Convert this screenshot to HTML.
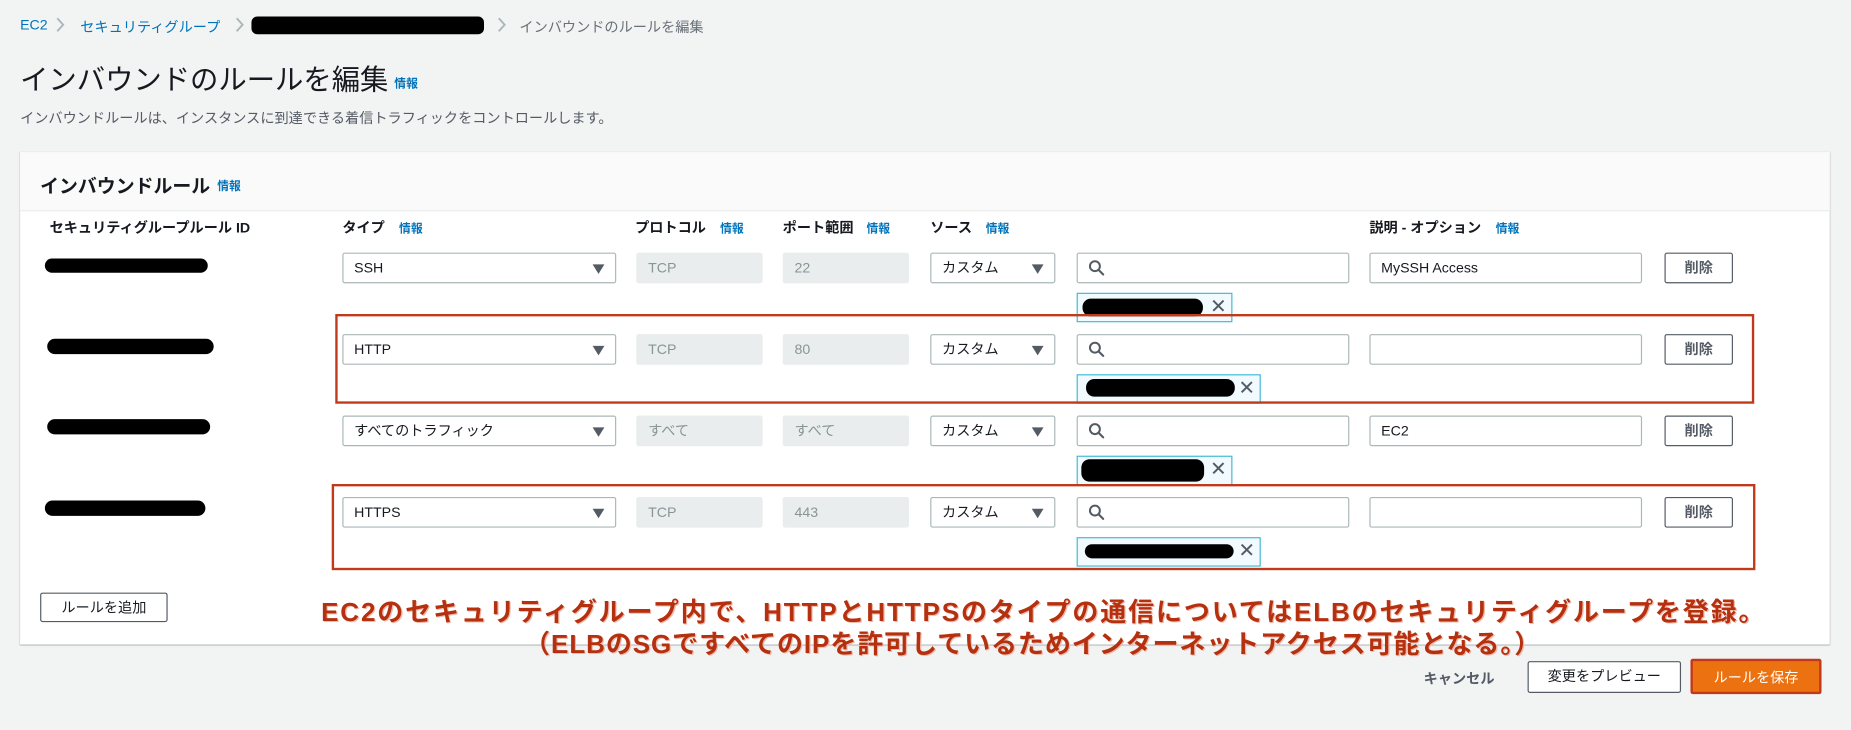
<!DOCTYPE html>
<html><head><meta charset="utf-8">
<style>
html,body{margin:0;padding:0;width:1851px;height:729px;overflow:hidden;background:#f2f3f3}
#s{position:absolute;left:0;top:0;width:1568px;height:618px;transform:scale(1.1805);transform-origin:0 0;font-family:"Liberation Sans","Noto Sans CJK JP",sans-serif;color:#16191f}
.a{position:absolute;white-space:nowrap}
.l{color:#0073bb}
.i{font-size:10px;color:#0073bb;font-weight:bold}
.bx{position:absolute;box-sizing:border-box;border:1px solid #aab7b8;background:#fff;height:26px;font-size:12px;line-height:24px;padding-left:9px;border-radius:2px}
.g{background:#eaeded;border-color:#eaeded;color:#879596}
.arr{position:absolute;right:9px;top:9px;width:0;height:0;border-left:5px solid transparent;border-right:5px solid transparent;border-top:8px solid #545b64}
.btn{position:absolute;box-sizing:border-box;border:1px solid #545b64;background:#fff;font-size:12px;text-align:center;line-height:24px;border-radius:2px;color:#545b64;font-weight:bold}
.tag{position:absolute;box-sizing:border-box;border:1px solid #44b9d6;background:#f1faff;height:25px}
.pill{position:absolute;background:#000;border-radius:7px}
.x{position:absolute;font-size:17px;color:#545b64;line-height:20px}
.red{position:absolute;border:2px solid #c0391b;box-sizing:border-box}
.q{position:absolute;left:9px;top:5px}
.chev{position:absolute;top:14px}
</style></head><body><div id="s">
<svg width="0" height="0" style="position:absolute"><defs><symbol id="mg" viewBox="0 0 14 14"><circle cx="5.5" cy="5.5" r="4.2" fill="none" stroke="#545b64" stroke-width="1.7"/><line x1="8.6" y1="8.6" x2="12.5" y2="12.5" stroke="#545b64" stroke-width="1.8" stroke-linecap="round"/></symbol><symbol id="cv" viewBox="0 0 8 14"><path d="M1.5 1.5 L6.5 7 L1.5 12.5" fill="none" stroke="#aab7b8" stroke-width="1.6"/></symbol></defs></svg>
<div class="a l" style="left:17px;top:14px;font-size:12px">EC2</div>
<svg class="chev" style="left:47px" width="8" height="14"><use href="#cv"/></svg>
<div class="a l" style="left:68px;top:14px;font-size:12px">セキュリティグループ</div>
<svg class="chev" style="left:199px" width="8" height="14"><use href="#cv"/></svg>
<div class="pill" style="left:213px;top:14px;width:197px;height:15px;border-radius:5px"></div>
<svg class="chev" style="left:421px" width="8" height="14"><use href="#cv"/></svg>
<div class="a" style="left:440px;top:14px;font-size:12px;color:#687078">インバウンドのルールを編集</div>
<div class="a" style="left:17px;top:48px;font-size:24px">インバウンドのルールを編集</div>
<div class="a i" style="left:334px;top:62px">情報</div>
<div class="a" style="left:17px;top:91px;font-size:12px;color:#545b64">インバウンドルールは、インスタンスに到達できる着信トラフィックをコントロールします。</div>
<div style="position:absolute;left:17px;top:128px;width:1533px;height:417px;background:#fff;box-shadow:0 1px 1px rgba(0,28,36,.4);border-top:1px solid #eaeded"></div>
<div style="position:absolute;left:17px;top:129px;width:1533px;height:49px;background:#fafafa;border-bottom:1px solid #eaeded"></div>
<div class="a" style="left:34px;top:144px;font-size:16px;font-weight:bold">インバウンドルール</div>
<div class="a i" style="left:184px;top:149px">情報</div>
<div class="a" style="left:42px;top:184px;font-size:12px;font-weight:bold">セキュリティグループルール ID</div>
<div class="a" style="left:290px;top:184px;font-size:12px;font-weight:bold">タイプ</div><div class="a i" style="left:338px;top:185px">情報</div>
<div class="a" style="left:538px;top:184px;font-size:12px;font-weight:bold">プロトコル</div><div class="a i" style="left:610px;top:185px">情報</div>
<div class="a" style="left:663px;top:184px;font-size:12px;font-weight:bold">ポート範囲</div><div class="a i" style="left:734px;top:185px">情報</div>
<div class="a" style="left:788px;top:184px;font-size:12px;font-weight:bold">ソース</div><div class="a i" style="left:835px;top:185px">情報</div>
<div class="a" style="left:1160px;top:184px;font-size:12px;font-weight:bold">説明 - オプション</div><div class="a i" style="left:1267px;top:185px">情報</div>

<div class="pill" style="left:38px;top:219px;width:138px;height:12px"></div>
<div class="bx" style="left:290px;top:214px;width:232px">SSH<div class="arr"></div></div>
<div class="bx g" style="left:539px;top:214px;width:107px">TCP</div>
<div class="bx g" style="left:663px;top:214px;width:107px">22</div>
<div class="bx" style="left:788px;top:214px;width:106px">カスタム<div class="arr"></div></div>
<div class="bx" style="left:912px;top:214px;width:231px"><svg class="q" width="14" height="14"><use href="#mg"/></svg></div>
<div class="bx" style="left:1160px;top:214px;width:231px">MySSH Access</div>
<div class="btn" style="left:1410px;top:214px;width:58px;height:26px">削除</div>
<div class="tag" style="left:912px;top:248px;width:132px"><div class="pill" style="left:4px;top:4px;width:102px;height:15px"></div><div class="x" style="left:112px;top:1px">✕</div></div>

<div class="pill" style="left:40px;top:287px;width:141px;height:13px"></div>
<div class="bx" style="left:290px;top:283px;width:232px">HTTP<div class="arr"></div></div>
<div class="bx g" style="left:539px;top:283px;width:107px">TCP</div>
<div class="bx g" style="left:663px;top:283px;width:107px">80</div>
<div class="bx" style="left:788px;top:283px;width:106px">カスタム<div class="arr"></div></div>
<div class="bx" style="left:912px;top:283px;width:231px"><svg class="q" width="14" height="14"><use href="#mg"/></svg></div>
<div class="bx" style="left:1160px;top:283px;width:231px"></div>
<div class="btn" style="left:1410px;top:283px;width:58px;height:26px">削除</div>
<div class="tag" style="left:912px;top:317px;width:156px"><div class="pill" style="left:7px;top:3px;width:126px;height:15px"></div><div class="x" style="left:136px;top:1px">✕</div></div>

<div class="pill" style="left:40px;top:355px;width:138px;height:13px"></div>
<div class="bx" style="left:290px;top:352px;width:232px">すべてのトラフィック<div class="arr"></div></div>
<div class="bx g" style="left:539px;top:352px;width:107px">すべて</div>
<div class="bx g" style="left:663px;top:352px;width:107px">すべて</div>
<div class="bx" style="left:788px;top:352px;width:106px">カスタム<div class="arr"></div></div>
<div class="bx" style="left:912px;top:352px;width:231px"><svg class="q" width="14" height="14"><use href="#mg"/></svg></div>
<div class="bx" style="left:1160px;top:352px;width:231px">EC2</div>
<div class="btn" style="left:1410px;top:352px;width:58px;height:26px">削除</div>
<div class="tag" style="left:912px;top:386px;width:132px"><div class="pill" style="left:3px;top:2px;width:104px;height:19px"></div><div class="x" style="left:112px;top:1px">✕</div></div>

<div class="pill" style="left:38px;top:424px;width:136px;height:13px"></div>
<div class="bx" style="left:290px;top:421px;width:232px">HTTPS<div class="arr"></div></div>
<div class="bx g" style="left:539px;top:421px;width:107px">TCP</div>
<div class="bx g" style="left:663px;top:421px;width:107px">443</div>
<div class="bx" style="left:788px;top:421px;width:106px">カスタム<div class="arr"></div></div>
<div class="bx" style="left:912px;top:421px;width:231px"><svg class="q" width="14" height="14"><use href="#mg"/></svg></div>
<div class="bx" style="left:1160px;top:421px;width:231px"></div>
<div class="btn" style="left:1410px;top:421px;width:58px;height:26px">削除</div>
<div class="tag" style="left:912px;top:455px;width:156px"><div class="pill" style="left:6px;top:5px;width:126px;height:12px"></div><div class="x" style="left:136px;top:1px">✕</div></div>

<div class="red" style="left:284px;top:266px;width:1202px;height:76px"></div>
<div class="red" style="left:281px;top:410px;width:1206px;height:73px"></div>

<div class="btn" style="left:34px;top:502px;width:108px;height:25px;font-weight:normal;color:#16191f">ルールを追加</div>

<div class="a" style="left:272px;top:501px;font-size:22px;font-weight:bold;color:#b5300f;letter-spacing:1.6px;text-shadow:1px 1px 0 #f0b8a8">EC2のセキュリティグループ内で、HTTPとHTTPSのタイプの通信についてはELBのセキュリティグループを登録。</div>
<div class="a" style="left:444px;top:528px;font-size:22px;font-weight:bold;color:#b5300f;letter-spacing:0.8px;text-shadow:1px 1px 0 #f0b8a8">（ELBのSGですべてのIPを許可しているためインターネットアクセス可能となる。）</div>

<div class="a" style="left:1206px;top:566px;font-size:12px;color:#545b64;font-weight:bold">キャンセル</div>
<div class="btn" style="left:1294px;top:560px;width:130px;height:27px;line-height:25px;color:#16191f;font-weight:normal">変更をプレビュー</div>
<div class="btn" style="left:1432px;top:558px;width:111px;height:30px;line-height:28px;background:#ec7211;border:2px solid #c0391b;color:#fff;font-weight:normal">ルールを保存</div>
</div></body></html>
